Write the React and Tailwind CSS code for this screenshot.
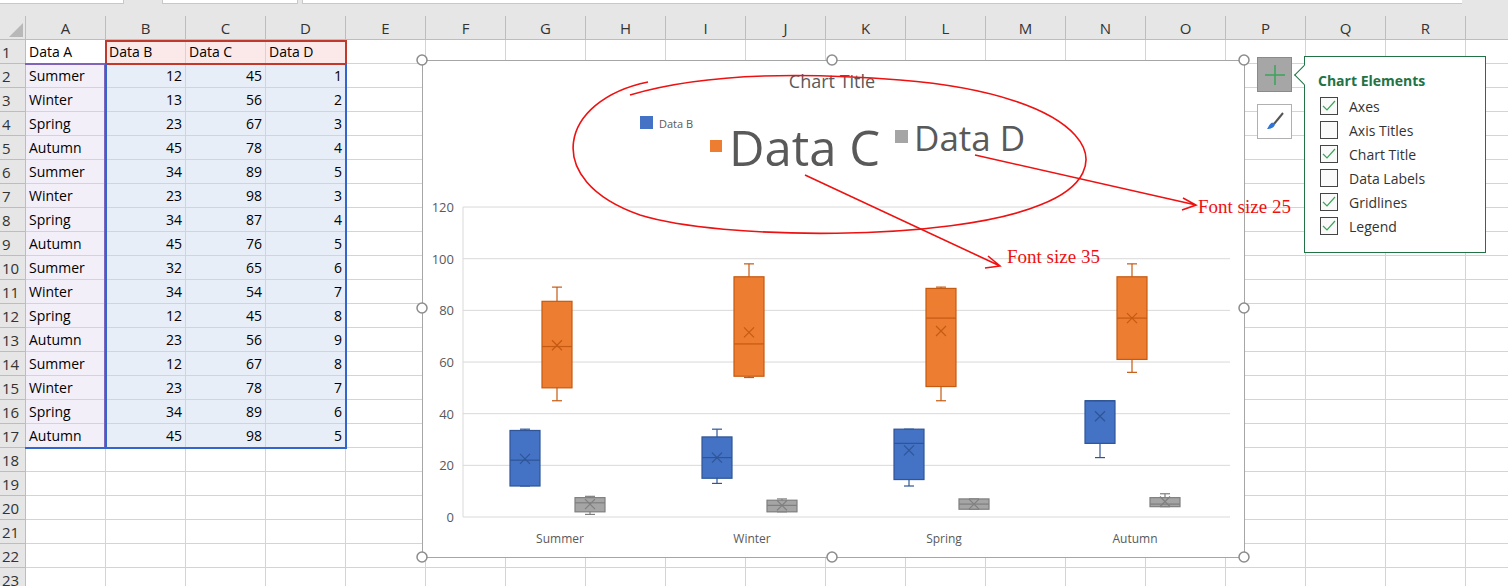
const data = [
  ["Summer", 12, 45, 1], ["Winter", 13, 56, 2], ["Spring", 23, 67, 3], ["Autumn", 45, 78, 4],
  ["Summer", 34, 89, 5], ["Winter", 23, 98, 3], ["Spring", 34, 87, 4], ["Autumn", 45, 76, 5],
  ["Summer", 32, 65, 6], ["Winter", 34, 54, 7], ["Spring", 12, 45, 8], ["Autumn", 23, 56, 9],
  ["Summer", 12, 67, 8], ["Winter", 23, 78, 7], ["Spring", 34, 89, 6], ["Autumn", 45, 98, 5],
];
const cols = "ABCDEFGHIJKLMNOPQR".split("");

// [lo, q1, median, q3, hi, mean] per series per category
const boxes = [
  { x: 560, label: "Summer", s: [[12, 12, 22, 33.5, 34, 22.5], [45, 50, 66, 83.5, 89, 66.5], [1, 2, 5.5, 7.5, 8, 5]] },
  { x: 752, label: "Winter", s: [[13, 15, 23, 31, 34, 23], [54, 54.5, 67, 93, 98, 71.5], [2, 2, 4.5, 6.5, 7, 4.5]] },
  { x: 944, label: "Spring", s: [[12, 14.5, 28.5, 34, 34, 25.8], [45, 50.5, 77, 88.5, 89, 72], [3, 3, 5, 7, 7, 5]] },
  { x: 1135, label: "Autumn", s: [[23, 28.5, 45, 45, 45, 39], [56, 61, 77, 93, 98, 77], [4, 4, 5, 7.5, 9, 6]] },
];
const colors = [["#4472c4", "#2f5597"], ["#ed7d31", "#c55a11"], ["#a5a5a5", "#7f7f7f"]];
const offs = [-35, -3, 30];
const Y = (v) => 517 - v * 2.583;

function Sheet() {
  const cell = "border-r border-b border-[#d4d4d4] px-[3px] h-6 leading-6 text-[14px] whitespace-nowrap overflow-hidden";
  return (
    <div className="grid grid-cols-[26px_repeat(18,80px)_1fr] text-[#000]">
      <div className="h-6 bg-[#e6e6e6] border-r border-b border-[#bdbdbd] flex items-end justify-end p-[2px]">
        <div className="w-0 h-0 border-l-[14px] border-l-transparent border-b-[14px] border-b-[#b8b8b8]" />
      </div>
      {cols.map((c) => (
        <div key={c} className="h-6 bg-[#e6e6e6] border-r border-b border-[#bdbdbd] text-center leading-6 text-[15px] text-[#333]">{c}</div>
      ))}
      <div className="h-6 bg-[#e6e6e6] border-b border-[#bdbdbd]" />
      {Array.from({ length: 23 }, (_, r) => {
        const row = r === 0 ? ["Data A", "Data B", "Data C", "Data D"] : data[r - 1];
        return [
          <div key={"h" + r} className="h-6 bg-[#e6e6e6] border-r border-b border-[#bdbdbd] leading-6 text-[15px] text-[#333] pl-[2px]">{r + 1}</div>,
          ...cols.map((c, i) => {
            let bg = "";
            if (row && i === 0 && r > 0) bg = "bg-[#f3eff9]";
            if (row && i > 0 && i < 4) bg = r === 0 ? "bg-[#fbe9e9]" : "bg-[#e8eef8]";
            const v = row && i < 4 ? row[i] : "";
            const right = typeof v === "number";
            return <div key={c + r} className={`${cell} ${bg} ${right ? "text-right" : ""}`}>{v}</div>;
          }),
          <div key={"z" + r} className="h-6 border-b border-[#d4d4d4]" />,
        ];
      })}
    </div>
  );
}

function Chart() {
  return (
    <svg className="absolute left-0 top-0" width="1508" height="586" style={{ fontFamily: "'Open Sans', sans-serif" }}>
      <rect x="422.5" y="60.5" width="822" height="497" fill="#fff" stroke="#a6a6a6" />
      {[[422, 60], [832, 60], [1244, 60], [422, 308], [1244, 308], [422, 557], [832, 557], [1244, 557]].map(([x, y], i) => (
        <circle key={i} cx={x} cy={y} r="5" fill="#fff" stroke="#8c8c8c" strokeWidth="1.5" />
      ))}
      <text x="832" y="88" textAnchor="middle" fontSize="18" fill="#595959">Chart Title</text>
      <rect x="640" y="116" width="13" height="13" fill="#4472c4" />
      <text x="659" y="128" fontSize="11" fill="#595959">Data B</text>
      <rect x="710" y="140" width="12" height="12" fill="#ed7d31" />
      <text x="729" y="166" fontSize="49" fill="#595959">Data C</text>
      <rect x="895" y="130" width="13" height="13" fill="#a5a5a5" />
      <text x="914" y="151" fontSize="35" fill="#595959">Data D</text>
      {[0, 20, 40, 60, 80, 100, 120].map((v) => (
        <g key={v}>
          <line x1="463" x2="1230" y1={Y(v)} y2={Y(v)} stroke="#d9d9d9" />
          <text x="454" y={Y(v) + 5} textAnchor="end" fontSize="13" fill="#595959">{v}</text>
        </g>
      ))}
      <line x1="463" x2="463" y1="207" y2="517" stroke="#d9d9d9" />
      {boxes.map((b) => (
        <g key={b.label}>
          {b.s.map(([lo, q1, md, q3, hi, mn], i) => {
            const cx = b.x + offs[i];
            const [fill, st] = colors[i];
            return (
              <g key={i} stroke={st} strokeWidth="1.2">
                <line x1={cx} x2={cx} y1={Y(hi)} y2={Y(lo)} />
                <line x1={cx - 5} x2={cx + 5} y1={Y(hi)} y2={Y(hi)} />
                <line x1={cx - 5} x2={cx + 5} y1={Y(lo)} y2={Y(lo)} />
                <rect x={cx - 15} y={Y(q3)} width="30" height={Y(q1) - Y(q3)} fill={fill} />
                <line x1={cx - 15} x2={cx + 15} y1={Y(md)} y2={Y(md)} />
                <path d={`M${cx - 5} ${Y(mn) - 5}l10 10M${cx + 5} ${Y(mn) - 5}l-10 10`} />
              </g>
            );
          })}
          <text x={b.x} y="543" textAnchor="middle" fontSize="12" fill="#595959">{b.label}</text>
        </g>
      ))}
      <g stroke="#ee1111" strokeWidth="1.6" fill="none">
        <path d="M648 82 C560 100 540 180 640 215 C720 240 950 242 1040 205 C1130 170 1090 95 900 80 C800 72 700 74 630 95" />
        <path d="M805 175 L1000 266 M988 256 L1000 266 L985 268" />
        <path d="M975 155 L1196 205 M1183 198 L1196 205 L1182 210" />
      </g>
      <g fill="#ee1111" fontSize="19" style={{ fontFamily: "'Liberation Serif', serif" }}>
        <text x="1007" y="263">Font size 35</text>
        <text x="1198" y="213">Font size 25</text>
      </g>
    </svg>
  );
}

function Panel() {
  const items = [["Axes", 1], ["Axis Titles", 0], ["Chart Title", 1], ["Data Labels", 0], ["Gridlines", 1], ["Legend", 1]];
  return (
    <>
      <div className="absolute left-[1257px] top-[57px] w-[35px] h-[35px] bg-[#a6a6a6] border border-[#8a8a8a] flex items-center justify-center">
        <svg width="24" height="24"><path d="M12 2v20M2 12h20" stroke="#3aa55a" strokeWidth="1.5" /></svg>
      </div>
      <div className="absolute left-[1257px] top-[104px] w-[35px] h-[35px] bg-white border border-[#b0b0b0] flex items-center justify-center">
        <svg width="22" height="22" viewBox="0 0 22 22">
          <path d="M19 2 L10 13" stroke="#555" strokeWidth="2" />
          <path d="M10 12 C6 11 5 15 3 18 C7 18 11 16 11 13 Z" fill="#2e75d6" />
        </svg>
      </div>
      <div className="absolute left-[1304px] top-[56px] w-[182px] h-[197px] bg-white border border-[#217346] pl-[13px] pt-[14px]" style={{ fontFamily: "'Open Sans', sans-serif" }}>
        <div className="absolute left-[-8px] top-[11px] w-[14px] h-[14px] bg-white border-l border-b border-[#217346] rotate-45" />
        <div className="text-[14px] font-bold text-[#217346] leading-5 mb-[3px]">Chart Elements</div>
        {items.map(([t, on]) => (
          <div key={t} className="flex items-center h-6 gap-[11px] pl-[2px]">
            <div className="w-[18px] h-[18px] border border-[#444] bg-[#fafafa] flex items-center justify-center">
              {on ? <svg width="14" height="12"><path d="M1 6l4 4 8-9" stroke="#3aa55a" fill="none" strokeWidth="1.2" /></svg> : null}
            </div>
            <span className="text-[14px] text-[#333]">{t}</span>
          </div>
        ))}
      </div>
    </>
  );
}

export default function App() {
  return (
    <div className="relative w-[1508px] h-[586px] overflow-hidden bg-white" style={{ fontFamily: "'Open Sans', 'Liberation Sans', sans-serif" }}>
      <div className="h-4 bg-[#e6e6e6] relative">
        <div className="absolute left-0 top-0 w-[124px] h-[4px] bg-white border-b border-r border-[#c8c8c8]" />
        <div className="absolute left-[162px] top-0 w-[136px] h-[4px] bg-white border-b border-r border-l border-[#c8c8c8]" />
        <div className="absolute left-[302px] top-0 w-[1160px] h-[4px] bg-white border-b border-l border-[#c8c8c8]" />
      </div>
      <Sheet />
      <div className="absolute left-[25px] top-[63px] w-[81px] h-[386px] border-2 border-b-0 border-l-0 border-[#8064b8]" />
      <div className="absolute left-[105px] top-[40px] w-[242px] h-[25px] border-2 border-[#c0392b]" />
      <div className="absolute left-[105px] top-[64px] w-[242px] h-[385px] border-2 border-t-0 border-[#3366cc]" />
      <div className="absolute left-[25px] top-[447px] w-[82px] h-[2px] bg-[#3366cc]" />
      <Chart />
      <Panel />
    </div>
  );
}
